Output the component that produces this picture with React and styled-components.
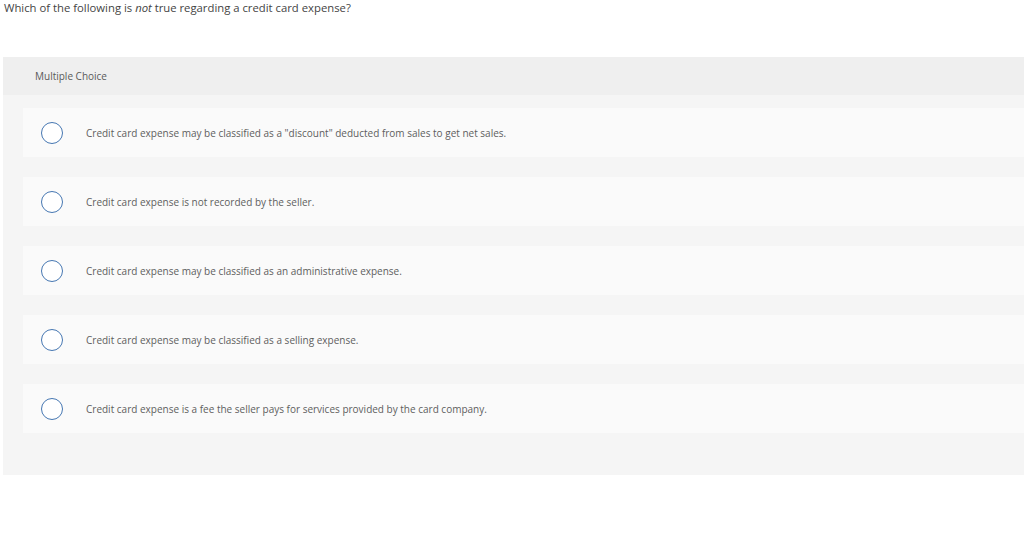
import React from 'react'
import styled, { createGlobalStyle } from 'styled-components'

const GlobalStyle = createGlobalStyle`
  body {
    margin: 0;
    background: #fff;
    font-family: "Open Sans", "Liberation Sans", sans-serif;
  }
`

const options = [
  'Credit card expense may be classified as a "discount" deducted from sales to get net sales.',
  'Credit card expense is not recorded by the seller.',
  'Credit card expense may be classified as an administrative expense.',
  'Credit card expense may be classified as a selling expense.',
  'Credit card expense is a fee the seller pays for services provided by the card company.'
]

export default function App() {
  return (
    <>
      <GlobalStyle />
      <Page>
        <Question>
          Which of the following is <em>not</em> true regarding a credit card
          expense?
        </Question>
        <Panel>
          <PanelHeader>Multiple Choice</PanelHeader>
          <OptionList>
            {options.map(text => (
              <Option key={text}>
                <Radio />
                <OptionText>{text}</OptionText>
              </Option>
            ))}
          </OptionList>
        </Panel>
      </Page>
    </>
  )
}

const Page = styled.div`
  padding: 0 0 0 3px;
`
const Question = styled.p`
  margin: 0;
  padding: 1px 0 0 1px;
  height: 57px;
  box-sizing: border-box;
  font-size: 11.3px;
  line-height: 14px;
  color: #444;
  em {
    font-style: italic;
  }
`
const Panel = styled.div`
  background: #f5f5f5;
`
const PanelHeader = styled.div`
  display: flex;
  align-items: center;
  height: 38px;
  padding-left: 32px;
  background: #efefef;
  font-size: 10px;
  color: #5a5a5a;
`
const OptionList = styled.div`
  display: flex;
  flex-direction: column;
  gap: 20px;
  padding: 13px 0 42px 20px;
`
const Option = styled.label`
  display: flex;
  align-items: center;
  height: 49px;
  padding-left: 18px;
  background: #fafafa;
`
const Radio = styled.span`
  flex: none;
  width: 22px;
  height: 22px;
  box-sizing: border-box;
  border: 1.2px solid #4677b2;
  border-radius: 50%;
  background: #fff;
`
const OptionText = styled.span`
  margin-left: 23px;
  font-size: 10px;
  color: #5e5e5e;
`
